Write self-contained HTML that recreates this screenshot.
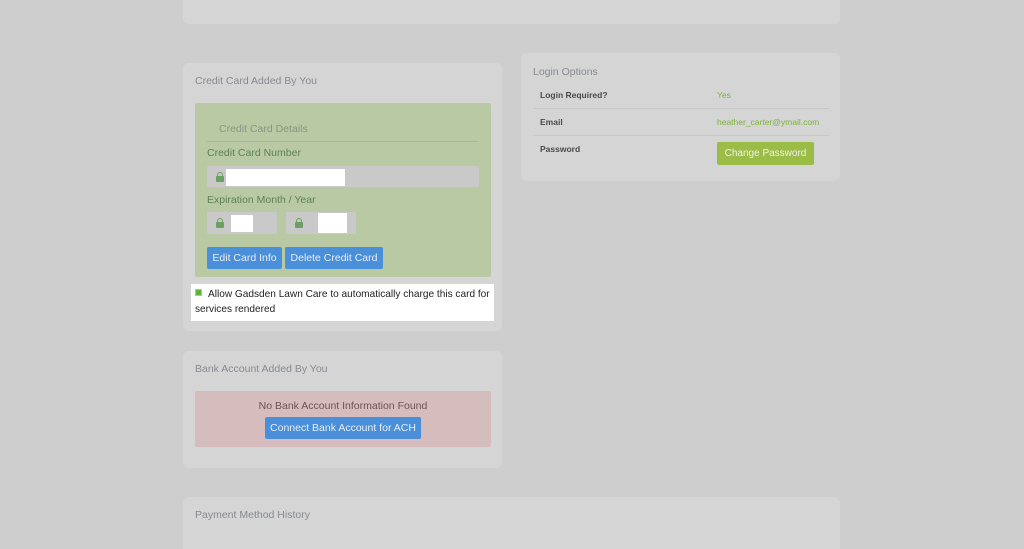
<!DOCTYPE html>
<html><head><style>
*{box-sizing:border-box;margin:0;padding:0}
body{width:1024px;height:549px;overflow:hidden;background:#cecece;font-family:"Liberation Sans",sans-serif;position:relative}
.card{position:absolute;background:#d5d5d5;border-radius:6px}
.t{position:absolute;font-size:10.5px;color:#878a93}
.abs{position:absolute}
.btn{position:absolute;background:#4a8fd9;color:#e8eef7;font-size:10.5px;border-radius:2px;text-align:center}
.lock{position:absolute;width:8px;height:6px;background:#6aa062;border-radius:1px}
.lock:before{content:"";position:absolute;left:1px;top:-4px;width:4px;height:4px;border:1.5px solid #6aa062;border-bottom:none;border-radius:3px 3px 0 0}
</style></head><body>
<div class="card" style="left:183px;top:0;width:657px;height:24px;border-radius:0 0 6px 6px"></div>

<div class="card" style="left:183px;top:63px;width:319px;height:268px">
 <div class="t" style="left:12px;top:12px">Credit Card Added By You</div>
 <div class="abs" style="left:12px;top:40px;width:296px;height:174px;background:#b9c9a4;border-radius:2px">
  <div class="abs" style="left:24px;top:20px;font-size:10.5px;color:#8a9585">Credit Card Details</div>
  <div class="abs" style="left:12px;top:38px;width:272px;height:1px;background:#a9b898"></div>
  <div class="abs" style="left:12px;top:44px;font-size:10.5px;color:#5f7f58">Credit Card Number</div>
  <div class="abs" style="left:12px;top:63px;width:272px;height:21px;background:#c9c9c9;border-radius:2px"></div>
  <div class="lock" style="left:21px;top:73px"></div>
  <div class="abs" style="left:31px;top:66px;width:119px;height:17px;background:#fff"></div>
  <div class="abs" style="left:12px;top:91px;font-size:10.5px;color:#5f7f58">Expiration Month / Year</div>
  <div class="abs" style="left:12px;top:109px;width:70px;height:22px;background:#c9c9c9;border-radius:2px"></div>
  <div class="lock" style="left:21px;top:119px"></div>
  <div class="abs" style="left:36px;top:112px;width:22px;height:17px;background:#fff"></div>
  <div class="abs" style="left:91px;top:109px;width:70px;height:22px;background:#c9c9c9;border-radius:2px"></div>
  <div class="lock" style="left:100px;top:119px"></div>
  <div class="abs" style="left:123px;top:110px;width:29px;height:20px;background:#fff"></div>
  <div class="btn" style="left:12px;top:144px;width:75px;height:22px;line-height:22px">Edit Card Info</div>
  <div class="btn" style="left:90px;top:144px;width:98px;height:22px;line-height:22px">Delete Credit Card</div>
 </div>
 <div class="abs" style="left:8px;top:221px;width:303px;height:37px;background:#fff"></div>
 <div class="abs" style="left:12px;top:226px;width:7px;height:7px;border:1px solid #bbb;background:#5bb13a"></div>
 <div class="abs" style="left:25px;top:224px;font-size:10.1px;line-height:15px;color:#222;white-space:nowrap">Allow Gadsden Lawn Care to automatically charge this card for</div>
 <div class="abs" style="left:12px;top:239px;font-size:10.1px;line-height:15px;color:#222;white-space:nowrap">services rendered</div>
</div>

<div class="card" style="left:521px;top:53px;width:319px;height:128px">
 <div class="t" style="left:12px;top:13px">Login Options</div>
 <div class="abs" style="left:19px;top:37px;font-size:8.5px;font-weight:bold;color:#4a4a4a">Login Required?</div>
 <div class="abs" style="left:196px;top:37px;font-size:8.5px;color:#7fb23a">Yes</div>
 <div class="abs" style="left:12px;top:55px;width:296px;height:1px;background:#c8c8c8"></div>
 <div class="abs" style="left:19px;top:64px;font-size:8.5px;font-weight:bold;color:#4a4a4a">Email</div>
 <div class="abs" style="left:196px;top:64px;font-size:8.5px;color:#7fb23a">heather_carter@ymail.com</div>
 <div class="abs" style="left:12px;top:82px;width:296px;height:1px;background:#c8c8c8"></div>
 <div class="abs" style="left:19px;top:91px;font-size:8.5px;font-weight:bold;color:#4a4a4a">Password</div>
 <div class="abs" style="left:196px;top:89px;width:97px;height:23px;line-height:23px;background:#9bbd48;color:#eef3e0;font-size:10px;text-align:center;border-radius:2px">Change Password</div>
</div>

<div class="card" style="left:183px;top:351px;width:319px;height:117px">
 <div class="t" style="left:12px;top:12px">Bank Account Added By You</div>
 <div class="abs" style="left:12px;top:40px;width:296px;height:56px;background:#d5bcbd;border-radius:2px">
  <div class="abs" style="left:0;top:9px;width:296px;text-align:center;font-size:10.5px;color:#6a5556">No Bank Account Information Found</div>
  <div class="btn" style="left:70px;top:26px;width:156px;height:22px;line-height:22px">Connect Bank Account for ACH</div>
 </div>
</div>

<div class="card" style="left:183px;top:497px;width:657px;height:52px;border-radius:6px 6px 0 0">
 <div class="t" style="left:12px;top:12px">Payment Method History</div>
</div>
</body></html>
